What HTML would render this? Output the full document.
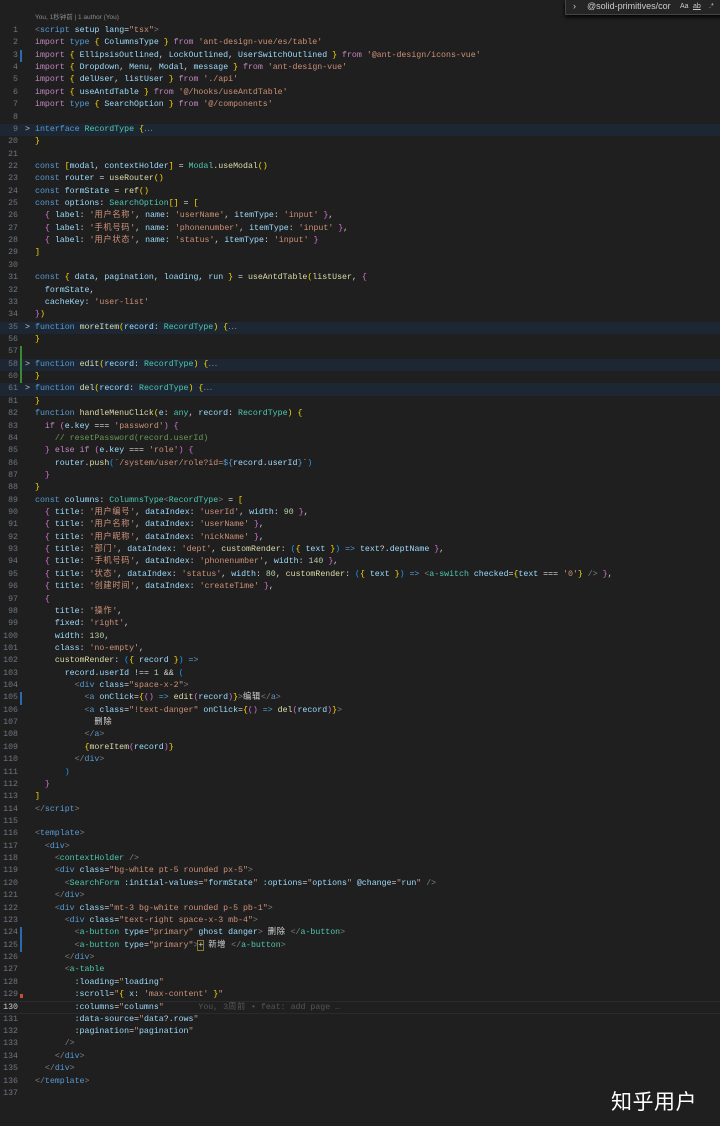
<!DOCTYPE html>
<html><head><meta charset="utf-8">
<style>
html,body{margin:0;padding:0;background:#1f1f1f;width:720px;height:1126px;overflow:hidden;position:relative}
#code{position:absolute;left:0;top:25px;width:720px;font-family:"Liberation Mono","Noto Sans CJK SC",monospace;font-size:8.25px;color:#d4d4d4}
.l{height:12.37px;line-height:12.37px;white-space:pre;position:relative}
.n{position:absolute;left:0;width:18px;text-align:right;color:#6e7681}
.x{position:absolute;left:35px}
.fold{background:#1c2733}
.fold:before{content:">";position:absolute;left:25px;color:#c5c5c5}
.k{color:#c586c0}.b{color:#569cd6}.s{color:#ce9178}.v{color:#9cdcfe}.t{color:#4ec9b0}.f{color:#dcdcaa}.nm{color:#b5cea8}
.g{color:#ffd700}.p{color:#da70d6}.q{color:#179fff}.cm{color:#6a9955}.gr{color:#808080}
.c{font-family:"Noto Sans CJK SC",sans-serif;letter-spacing:0.7px;line-height:0}
.el{color:#8a8a8a}
.mk{position:absolute;left:20px;width:2px;height:12.37px}
.cur{border-top:1px solid #2b2b2b;border-bottom:1px solid #2b2b2b;box-sizing:border-box}
</style></head><body>
<div style="position:absolute;left:35px;top:14px;font-family:'Liberation Sans','Noto Sans CJK SC',sans-serif;font-size:6.5px;color:#8a8a8a;line-height:8px">You, 1秒钟前 | 1 author (You)</div>
<div style="position:absolute;left:565px;top:0;width:160px;height:14px;background:#252526;border-left:1px solid #444;border-bottom:1px solid #444;box-shadow:0 2px 4px #000;font-family:'Liberation Sans',sans-serif;font-size:9px;color:#ccc;line-height:13px">
<span style="position:absolute;left:7px">›</span><span style="position:absolute;left:21px">@solid-primitives/cor</span><span style="position:absolute;left:114px;font-size:7px">Aa</span><span style="position:absolute;left:127px;font-size:7px;text-decoration:underline">ab</span><span style="position:absolute;left:143px;font-size:7px">.*</span></div>
<div id="code">
<div class="l"><span class="n">1</span><span class="x"><span class="gr">&lt;</span><span class="b">script</span> <span class="v">setup</span> <span class="v">lang</span>=<span class="s">"tsx"</span><span class="gr">&gt;</span></span></div>
<div class="l"><span class="n">2</span><span class="x"><span class="k">import</span> <span class="b">type</span> <span class="g">{</span> <span class="v">ColumnsType</span> <span class="g">}</span> <span class="k">from</span> <span class="s">'ant-design-vue/es/table'</span></span></div>
<div class="l"><span class="mk" style="background:#2a6bb0"></span><span class="n">3</span><span class="x"><span class="k">import</span> <span class="g">{</span> <span class="v">EllipsisOutlined</span>, <span class="v">LockOutlined</span>, <span class="v">UserSwitchOutlined</span> <span class="g">}</span> <span class="k">from</span> <span class="s">'@ant-design/icons-vue'</span></span></div>
<div class="l"><span class="n">4</span><span class="x"><span class="k">import</span> <span class="g">{</span> <span class="v">Dropdown</span>, <span class="v">Menu</span>, <span class="v">Modal</span>, <span class="v">message</span> <span class="g">}</span> <span class="k">from</span> <span class="s">'ant-design-vue'</span></span></div>
<div class="l"><span class="n">5</span><span class="x"><span class="k">import</span> <span class="g">{</span> <span class="v">delUser</span>, <span class="v">listUser</span> <span class="g">}</span> <span class="k">from</span> <span class="s">'./api'</span></span></div>
<div class="l"><span class="n">6</span><span class="x"><span class="k">import</span> <span class="g">{</span> <span class="v">useAntdTable</span> <span class="g">}</span> <span class="k">from</span> <span class="s">'@/hooks/useAntdTable'</span></span></div>
<div class="l"><span class="n">7</span><span class="x"><span class="k">import</span> <span class="b">type</span> <span class="g">{</span> <span class="v">SearchOption</span> <span class="g">}</span> <span class="k">from</span> <span class="s">'@/components'</span></span></div>
<div class="l"><span class="n">8</span></div>
<div class="l fold"><span class="n">9</span><span class="x"><span class="b">interface</span> <span class="t">RecordType</span> <span class="g">{</span><span class="el">⋯</span></span></div>
<div class="l"><span class="n">20</span><span class="x"><span class="g">}</span></span></div>
<div class="l"><span class="n">21</span></div>
<div class="l"><span class="n">22</span><span class="x"><span class="b">const</span> <span class="g">[</span><span class="v">modal</span>, <span class="v">contextHolder</span><span class="g">]</span> = <span class="t">Modal</span>.<span class="f">useModal</span><span class="g">()</span></span></div>
<div class="l"><span class="n">23</span><span class="x"><span class="b">const</span> <span class="v">router</span> = <span class="f">useRouter</span><span class="g">()</span></span></div>
<div class="l"><span class="n">24</span><span class="x"><span class="b">const</span> <span class="v">formState</span> = <span class="f">ref</span><span class="g">()</span></span></div>
<div class="l"><span class="n">25</span><span class="x"><span class="b">const</span> <span class="v">options</span>: <span class="t">SearchOption</span><span class="g">[]</span> = <span class="g">[</span></span></div>
<div class="l"><span class="n">26</span><span class="x">  <span class="p">{</span> <span class="v">label</span>: <span class="s">'<span class="c">用户名称</span>'</span>, <span class="v">name</span>: <span class="s">'userName'</span>, <span class="v">itemType</span>: <span class="s">'input'</span> <span class="p">}</span>,</span></div>
<div class="l"><span class="n">27</span><span class="x">  <span class="p">{</span> <span class="v">label</span>: <span class="s">'<span class="c">手机号码</span>'</span>, <span class="v">name</span>: <span class="s">'phonenumber'</span>, <span class="v">itemType</span>: <span class="s">'input'</span> <span class="p">}</span>,</span></div>
<div class="l"><span class="n">28</span><span class="x">  <span class="p">{</span> <span class="v">label</span>: <span class="s">'<span class="c">用户状态</span>'</span>, <span class="v">name</span>: <span class="s">'status'</span>, <span class="v">itemType</span>: <span class="s">'input'</span> <span class="p">}</span></span></div>
<div class="l"><span class="n">29</span><span class="x"><span class="g">]</span></span></div>
<div class="l"><span class="n">30</span></div>
<div class="l"><span class="n">31</span><span class="x"><span class="b">const</span> <span class="g">{</span> <span class="v">data</span>, <span class="v">pagination</span>, <span class="v">loading</span>, <span class="v">run</span> <span class="g">}</span> = <span class="f">useAntdTable</span><span class="g">(</span><span class="f">listUser</span>, <span class="p">{</span></span></div>
<div class="l"><span class="n">32</span><span class="x">  <span class="v">formState</span>,</span></div>
<div class="l"><span class="n">33</span><span class="x">  <span class="v">cacheKey</span>: <span class="s">'user-list'</span></span></div>
<div class="l"><span class="n">34</span><span class="x"><span class="p">}</span><span class="g">)</span></span></div>
<div class="l fold"><span class="n">35</span><span class="x"><span class="b">function</span> <span class="f">moreItem</span><span class="g">(</span><span class="v">record</span>: <span class="t">RecordType</span><span class="g">)</span> <span class="g">{</span><span class="el">⋯</span></span></div>
<div class="l"><span class="n">56</span><span class="x"><span class="g">}</span></span></div>
<div class="l"><span class="mk" style="background:#388a34"></span><span class="n">57</span></div>
<div class="l fold"><span class="mk" style="background:#388a34"></span><span class="n">58</span><span class="x"><span class="b">function</span> <span class="f">edit</span><span class="g">(</span><span class="v">record</span>: <span class="t">RecordType</span><span class="g">)</span> <span class="g">{</span><span class="el">⋯</span></span></div>
<div class="l"><span class="mk" style="background:#388a34"></span><span class="n">60</span><span class="x"><span class="g">}</span></span></div>
<div class="l fold"><span class="n">61</span><span class="x"><span class="b">function</span> <span class="f">del</span><span class="g">(</span><span class="v">record</span>: <span class="t">RecordType</span><span class="g">)</span> <span class="g">{</span><span class="el">⋯</span></span></div>
<div class="l"><span class="n">81</span><span class="x"><span class="g">}</span></span></div>
<div class="l"><span class="n">82</span><span class="x"><span class="b">function</span> <span class="f">handleMenuClick</span><span class="g">(</span><span class="v">e</span>: <span class="t">any</span>, <span class="v">record</span>: <span class="t">RecordType</span><span class="g">)</span> <span class="g">{</span></span></div>
<div class="l"><span class="n">83</span><span class="x">  <span class="k">if</span> <span class="p">(</span><span class="v">e</span>.<span class="v">key</span> === <span class="s">'password'</span><span class="p">)</span> <span class="p">{</span></span></div>
<div class="l"><span class="n">84</span><span class="x">    <span class="cm">// resetPassword(record.userId)</span></span></div>
<div class="l"><span class="n">85</span><span class="x">  <span class="p">}</span> <span class="k">else</span> <span class="k">if</span> <span class="p">(</span><span class="v">e</span>.<span class="v">key</span> === <span class="s">'role'</span><span class="p">)</span> <span class="p">{</span></span></div>
<div class="l"><span class="n">86</span><span class="x">    <span class="v">router</span>.<span class="f">push</span><span class="q">(</span><span class="s">`/system/user/role?id=</span><span class="b">${</span><span class="v">record</span>.<span class="v">userId</span><span class="b">}</span><span class="s">`</span><span class="q">)</span></span></div>
<div class="l"><span class="n">87</span><span class="x">  <span class="p">}</span></span></div>
<div class="l"><span class="n">88</span><span class="x"><span class="g">}</span></span></div>
<div class="l"><span class="n">89</span><span class="x"><span class="b">const</span> <span class="v">columns</span>: <span class="t">ColumnsType</span><span class="gr">&lt;</span><span class="t">RecordType</span><span class="gr">&gt;</span> = <span class="g">[</span></span></div>
<div class="l"><span class="n">90</span><span class="x">  <span class="p">{</span> <span class="v">title</span>: <span class="s">'<span class="c">用户编号</span>'</span>, <span class="v">dataIndex</span>: <span class="s">'userId'</span>, <span class="v">width</span>: <span class="nm">90</span> <span class="p">}</span>,</span></div>
<div class="l"><span class="n">91</span><span class="x">  <span class="p">{</span> <span class="v">title</span>: <span class="s">'<span class="c">用户名称</span>'</span>, <span class="v">dataIndex</span>: <span class="s">'userName'</span> <span class="p">}</span>,</span></div>
<div class="l"><span class="n">92</span><span class="x">  <span class="p">{</span> <span class="v">title</span>: <span class="s">'<span class="c">用户昵称</span>'</span>, <span class="v">dataIndex</span>: <span class="s">'nickName'</span> <span class="p">}</span>,</span></div>
<div class="l"><span class="n">93</span><span class="x">  <span class="p">{</span> <span class="v">title</span>: <span class="s">'<span class="c">部门</span>'</span>, <span class="v">dataIndex</span>: <span class="s">'dept'</span>, <span class="f">customRender</span>: <span class="q">(</span><span class="g">{</span> <span class="v">text</span> <span class="g">}</span><span class="q">)</span> <span class="b">=&gt;</span> <span class="v">text</span>?.<span class="v">deptName</span> <span class="p">}</span>,</span></div>
<div class="l"><span class="n">94</span><span class="x">  <span class="p">{</span> <span class="v">title</span>: <span class="s">'<span class="c">手机号码</span>'</span>, <span class="v">dataIndex</span>: <span class="s">'phonenumber'</span>, <span class="v">width</span>: <span class="nm">140</span> <span class="p">}</span>,</span></div>
<div class="l"><span class="n">95</span><span class="x">  <span class="p">{</span> <span class="v">title</span>: <span class="s">'<span class="c">状态</span>'</span>, <span class="v">dataIndex</span>: <span class="s">'status'</span>, <span class="v">width</span>: <span class="nm">80</span>, <span class="f">customRender</span>: <span class="q">(</span><span class="g">{</span> <span class="v">text</span> <span class="g">}</span><span class="q">)</span> <span class="b">=&gt;</span> <span class="gr">&lt;</span><span class="t">a-switch</span> <span class="v">checked</span>=<span class="g">{</span><span class="v">text</span> === <span class="s">'0'</span><span class="g">}</span> <span class="gr">/&gt;</span> <span class="p">}</span>,</span></div>
<div class="l"><span class="n">96</span><span class="x">  <span class="p">{</span> <span class="v">title</span>: <span class="s">'<span class="c">创建时间</span>'</span>, <span class="v">dataIndex</span>: <span class="s">'createTime'</span> <span class="p">}</span>,</span></div>
<div class="l"><span class="n">97</span><span class="x">  <span class="p">{</span></span></div>
<div class="l"><span class="n">98</span><span class="x">    <span class="v">title</span>: <span class="s">'<span class="c">操作</span>'</span>,</span></div>
<div class="l"><span class="n">99</span><span class="x">    <span class="v">fixed</span>: <span class="s">'right'</span>,</span></div>
<div class="l"><span class="n">100</span><span class="x">    <span class="v">width</span>: <span class="nm">130</span>,</span></div>
<div class="l"><span class="n">101</span><span class="x">    <span class="v">class</span>: <span class="s">'no-empty'</span>,</span></div>
<div class="l"><span class="n">102</span><span class="x">    <span class="f">customRender</span>: <span class="q">(</span><span class="g">{</span> <span class="v">record</span> <span class="g">}</span><span class="q">)</span> <span class="b">=&gt;</span></span></div>
<div class="l"><span class="n">103</span><span class="x">      <span class="v">record</span>.<span class="v">userId</span> !== <span class="nm">1</span> &amp;&amp; <span class="q">(</span></span></div>
<div class="l"><span class="n">104</span><span class="x">        <span class="gr">&lt;</span><span class="b">div</span> <span class="v">class</span>=<span class="s">"space-x-2"</span><span class="gr">&gt;</span></span></div>
<div class="l"><span class="mk" style="background:#2a6bb0"></span><span class="n">105</span><span class="x">          <span class="gr">&lt;</span><span class="b">a</span> <span class="v">onClick</span>=<span class="g">{</span><span class="p">()</span> <span class="b">=&gt;</span> <span class="f">edit</span><span class="p">(</span><span class="v">record</span><span class="p">)</span><span class="g">}</span><span class="gr">&gt;</span><span class="c">编辑</span><span class="gr">&lt;/</span><span class="b">a</span><span class="gr">&gt;</span></span></div>
<div class="l"><span class="n">106</span><span class="x">          <span class="gr">&lt;</span><span class="b">a</span> <span class="v">class</span>=<span class="s">"!text-danger"</span> <span class="v">onClick</span>=<span class="g">{</span><span class="p">()</span> <span class="b">=&gt;</span> <span class="f">del</span><span class="p">(</span><span class="v">record</span><span class="p">)</span><span class="g">}</span><span class="gr">&gt;</span></span></div>
<div class="l"><span class="n">107</span><span class="x">            <span class="c">删除</span></span></div>
<div class="l"><span class="n">108</span><span class="x">          <span class="gr">&lt;/</span><span class="b">a</span><span class="gr">&gt;</span></span></div>
<div class="l"><span class="n">109</span><span class="x">          <span class="g">{</span><span class="f">moreItem</span><span class="p">(</span><span class="v">record</span><span class="p">)</span><span class="g">}</span></span></div>
<div class="l"><span class="n">110</span><span class="x">        <span class="gr">&lt;/</span><span class="b">div</span><span class="gr">&gt;</span></span></div>
<div class="l"><span class="n">111</span><span class="x">      <span class="q">)</span></span></div>
<div class="l"><span class="n">112</span><span class="x">  <span class="p">}</span></span></div>
<div class="l"><span class="n">113</span><span class="x"><span class="g">]</span></span></div>
<div class="l"><span class="n">114</span><span class="x"><span class="gr">&lt;/</span><span class="b">script</span><span class="gr">&gt;</span></span></div>
<div class="l"><span class="n">115</span></div>
<div class="l"><span class="n">116</span><span class="x"><span class="gr">&lt;</span><span class="b">template</span><span class="gr">&gt;</span></span></div>
<div class="l"><span class="n">117</span><span class="x">  <span class="gr">&lt;</span><span class="b">div</span><span class="gr">&gt;</span></span></div>
<div class="l"><span class="n">118</span><span class="x">    <span class="gr">&lt;</span><span class="t">contextHolder</span> <span class="gr">/&gt;</span></span></div>
<div class="l"><span class="n">119</span><span class="x">    <span class="gr">&lt;</span><span class="b">div</span> <span class="v">class</span>=<span class="s">"bg-white pt-5 rounded px-5"</span><span class="gr">&gt;</span></span></div>
<div class="l"><span class="n">120</span><span class="x">      <span class="gr">&lt;</span><span class="t">SearchForm</span> <span class="v">:initial-values</span>=<span class="s">"</span><span class="v">formState</span><span class="s">"</span> <span class="v">:options</span>=<span class="s">"</span><span class="v">options</span><span class="s">"</span> <span class="v">@change</span>=<span class="s">"</span><span class="v">run</span><span class="s">"</span> <span class="gr">/&gt;</span></span></div>
<div class="l"><span class="n">121</span><span class="x">    <span class="gr">&lt;/</span><span class="b">div</span><span class="gr">&gt;</span></span></div>
<div class="l"><span class="n">122</span><span class="x">    <span class="gr">&lt;</span><span class="b">div</span> <span class="v">class</span>=<span class="s">"mt-3 bg-white rounded p-5 pb-1"</span><span class="gr">&gt;</span></span></div>
<div class="l"><span class="n">123</span><span class="x">      <span class="gr">&lt;</span><span class="b">div</span> <span class="v">class</span>=<span class="s">"text-right space-x-3 mb-4"</span><span class="gr">&gt;</span></span></div>
<div class="l"><span class="mk" style="background:#2a6bb0"></span><span class="n">124</span><span class="x">        <span class="gr">&lt;</span><span class="t">a-button</span> <span class="v">type</span>=<span class="s">"primary"</span> <span class="v">ghost</span> <span class="v">danger</span><span class="gr">&gt;</span> <span class="c">删除</span> <span class="gr">&lt;/</span><span class="t">a-button</span><span class="gr">&gt;</span></span></div>
<div class="l"><span class="mk" style="background:#2a6bb0"></span><span class="n">125</span><span class="x">        <span class="gr">&lt;</span><span class="t">a-button</span> <span class="v">type</span>=<span class="s">"primary"</span><span class="gr">&gt;</span><span style="outline:1px solid #8a7a30">+</span> <span class="c">新增</span> <span class="gr">&lt;/</span><span class="t">a-button</span><span class="gr">&gt;</span></span></div>
<div class="l"><span class="n">126</span><span class="x">      <span class="gr">&lt;/</span><span class="b">div</span><span class="gr">&gt;</span></span></div>
<div class="l"><span class="n">127</span><span class="x">      <span class="gr">&lt;</span><span class="t">a-table</span></span></div>
<div class="l"><span class="n">128</span><span class="x">        <span class="v">:loading</span>=<span class="s">"</span><span class="v">loading</span><span class="s">"</span></span></div>
<div class="l"><span class="mk" style="background:#c74e39;width:3px;height:4px;top:5px"></span><span class="n">129</span><span class="x">        <span class="v">:scroll</span>=<span class="s">"</span><span class="g">{</span> <span class="v">x</span>: <span class="s">'max-content'</span> <span class="g">}</span><span class="s">"</span></span></div>
<div class="l cur"><span class="n" style="color:#ccc">130</span><span class="x">        <span class="v">:columns</span>=<span class="s">"</span><span class="v">columns</span><span class="s">"</span>       <span style="color:#555">You, 3<span class="c">周前</span> • feat: add page …</span></span></div>
<div class="l"><span class="n">131</span><span class="x">        <span class="v">:data-source</span>=<span class="s">"</span><span class="v">data</span>?.<span class="v">rows</span><span class="s">"</span></span></div>
<div class="l"><span class="n">132</span><span class="x">        <span class="v">:pagination</span>=<span class="s">"</span><span class="v">pagination</span><span class="s">"</span></span></div>
<div class="l"><span class="n">133</span><span class="x">      <span class="gr">/&gt;</span></span></div>
<div class="l"><span class="n">134</span><span class="x">    <span class="gr">&lt;/</span><span class="b">div</span><span class="gr">&gt;</span></span></div>
<div class="l"><span class="n">135</span><span class="x">  <span class="gr">&lt;/</span><span class="b">div</span><span class="gr">&gt;</span></span></div>
<div class="l"><span class="n">136</span><span class="x"><span class="gr">&lt;/</span><span class="b">template</span><span class="gr">&gt;</span></span></div>
<div class="l"><span class="n">137</span></div>
</div>
<div style="position:absolute;left:611px;top:1086px;font-family:'Noto Sans CJK SC',sans-serif;font-size:21px;color:#fff;letter-spacing:0.5px">知乎用户</div>
</body></html>
